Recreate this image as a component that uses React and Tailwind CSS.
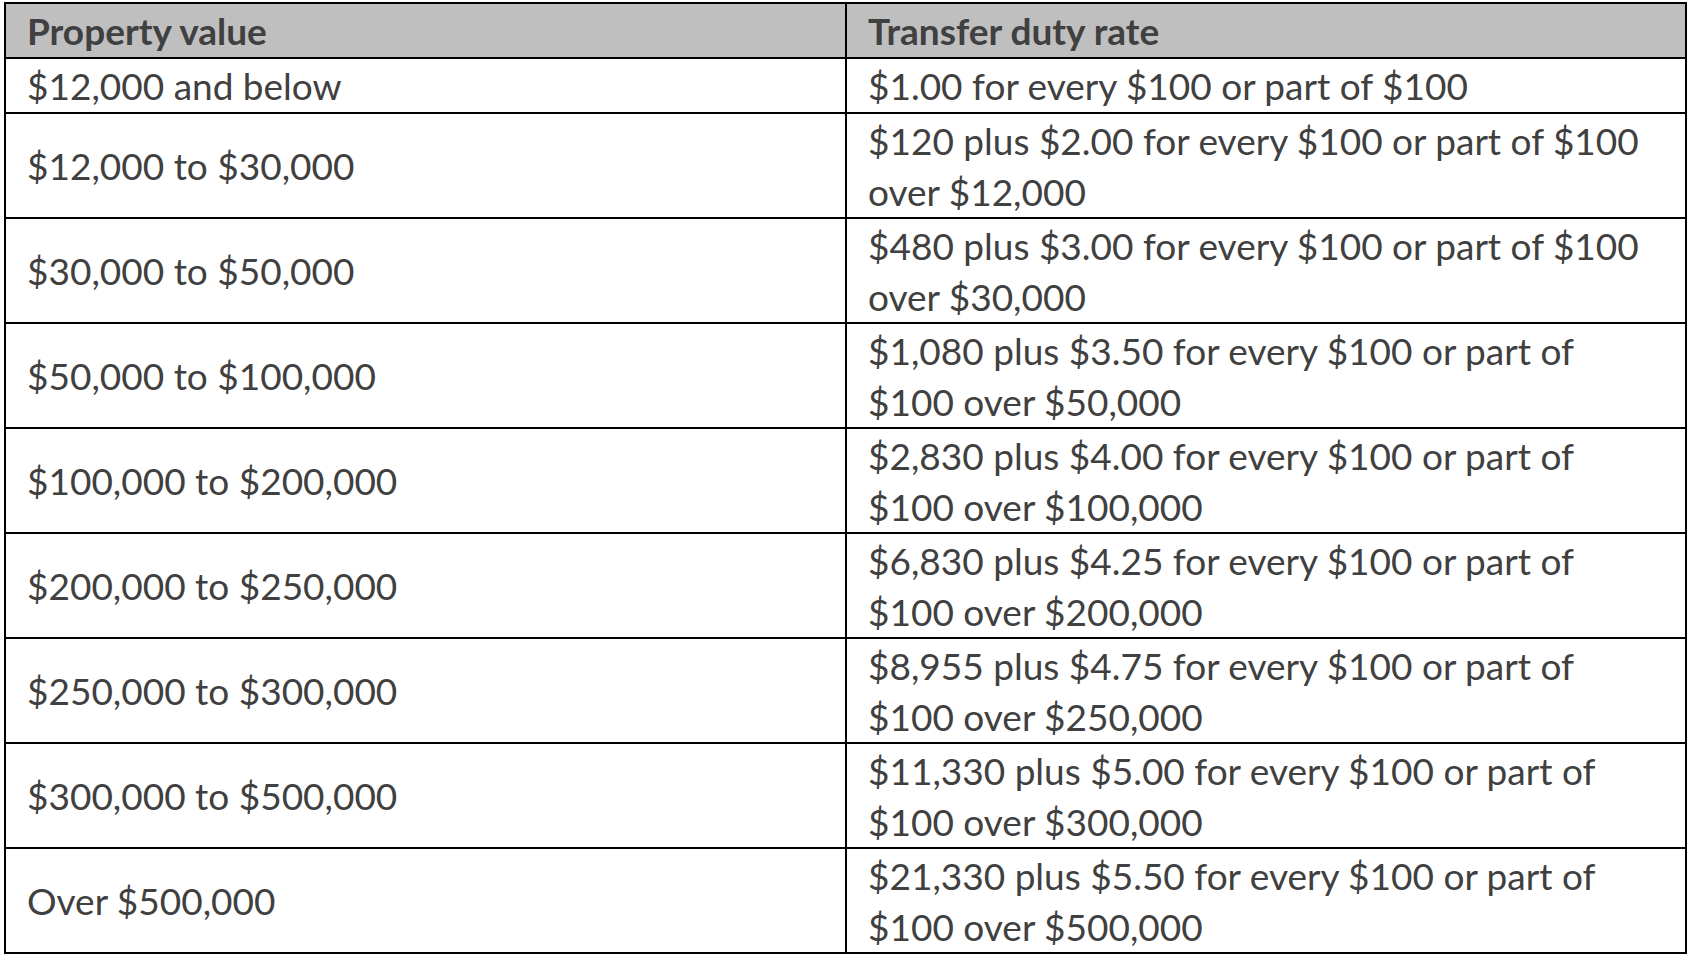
const rows = [
  { value: "$12,000 and below", rate: ["$1.00 for every $100 or part of $100"] },
  { value: "$12,000 to $30,000", rate: ["$120 plus $2.00 for every $100 or part of $100", "over $12,000"] },
  { value: "$30,000 to $50,000", rate: ["$480 plus $3.00 for every $100 or part of $100", "over $30,000"] },
  { value: "$50,000 to $100,000", rate: ["$1,080 plus $3.50 for every $100 or part of", "$100 over $50,000"] },
  { value: "$100,000 to $200,000", rate: ["$2,830 plus $4.00 for every $100 or part of", "$100 over $100,000"] },
  { value: "$200,000 to $250,000", rate: ["$6,830 plus $4.25 for every $100 or part of", "$100 over $200,000"] },
  { value: "$250,000 to $300,000", rate: ["$8,955 plus $4.75 for every $100 or part of", "$100 over $250,000"] },
  { value: "$300,000 to $500,000", rate: ["$11,330 plus $5.00 for every $100 or part of", "$100 over $300,000"] },
  { value: "Over $500,000", rate: ["$21,330 plus $5.50 for every $100 or part of", "$100 over $500,000"] },
];

export default function App() {
  return (
    <div className="min-h-screen bg-white pl-[4px] pt-[2px] font-['Lato',sans-serif] text-[#404040]">
      <table className="w-[1683px] table-fixed border-collapse border-2 border-black text-[37px] leading-[51px]">
        <colgroup>
          <col className="w-[841px]" />
          <col />
        </colgroup>
        <thead>
          <tr className="h-[55px] bg-[#bfbfbf]">
            <th className="border-2 border-black pl-[21px] text-left align-middle font-bold">Property value</th>
            <th className="border-2 border-black pl-[21px] text-left align-middle font-bold">Transfer duty rate</th>
          </tr>
        </thead>
        <tbody>
          {rows.map((row, i) => (
            <tr key={row.value} className={i === 0 ? "h-[55px]" : "h-[105px]"}>
              <td className="border-2 border-black pl-[21px] align-middle">{row.value}</td>
              <td className="border-2 border-black pl-[21px] align-middle">
                {row.rate.map((line) => (
                  <div key={line} className="whitespace-nowrap">{line}</div>
                ))}
              </td>
            </tr>
          ))}
        </tbody>
      </table>
    </div>
  );
}
